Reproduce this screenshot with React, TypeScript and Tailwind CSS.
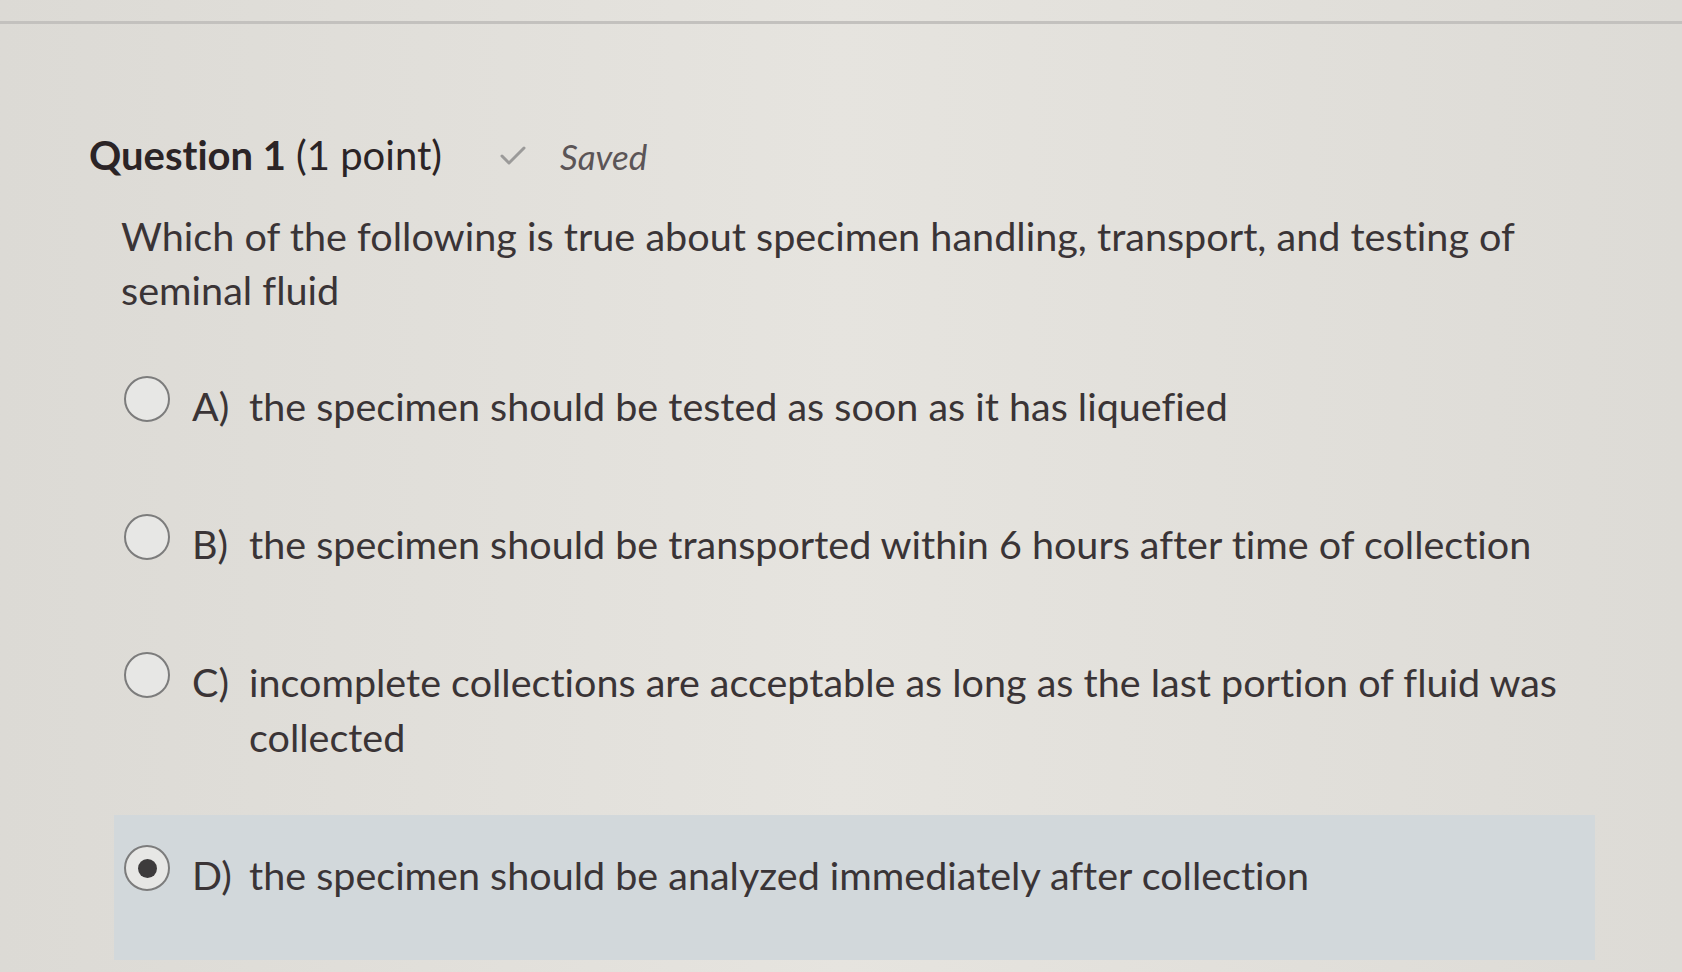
import React from "react"

interface Option {
  letter: string
  text: string
  selected?: boolean
}

const options: Option[] = [
  { letter: "A)", text: "the specimen should be tested as soon as it has liquefied" },
  { letter: "B)", text: "the specimen should be transported within 6 hours after time of collection" },
  {
    letter: "C)",
    text: "incomplete collections are acceptable as long as the last portion of fluid was collected",
  },
  { letter: "D)", text: "the specimen should be analyzed immediately after collection", selected: true },
]

function Radio({ checked }: { checked?: boolean }) {
  return (
    <div className="mt-[-2px] w-[46px] h-[46px] shrink-0 rounded-full border-2 border-[#7c7c7c] bg-[#e7e7e5] flex items-center justify-center">
      {checked && <div className="w-[19px] h-[19px] rounded-full bg-[#3d3b3c]" />}
    </div>
  )
}

function OptionRow({ option, last }: { option: Option; last?: boolean }) {
  return (
    <div
      className={`flex items-start pl-[10px] pr-[20px] ${
        option.selected ? "bg-[#d2d8db] pt-[32px] pb-[58px]" : last ? "pt-[28px] pb-[51px]" : "pt-[28px] pb-[55px]"
      }`}
    >
      <Radio checked={option.selected} />
      <div className="ml-[22px] flex text-[39.5px] leading-[55px] text-[#3a3436]">
        <span className="w-[57px] shrink-0">{option.letter}</span>
        <span>{option.text}</span>
      </div>
    </div>
  )
}

export default function App() {
  return (
    <div
      className="w-[1682px] h-[972px] overflow-hidden bg-linear-to-r from-[#dcdad5] via-[#e6e4df] to-[#dddbd6] [font-variant-ligatures:none]"
      style={{ fontFamily: "Lato, 'Open Sans', sans-serif" }}
    >
      <div className="h-[24px] border-b-[3px] border-[#c3c1be]" />

      <div className="pl-[89px] pt-[107px]">
        {/* Header */}
        <div className="flex items-baseline leading-[48px] text-[#2b2426]">
          <span className="text-[40px] font-bold">Question 1</span>
          <span className="text-[40px] ml-[10px]">(1 point)</span>
          <svg
            className="ml-[56px] w-[30px] h-[24px] self-center"
            viewBox="0 0 30 24"
            fill="none"
            stroke="#9b9a99"
            strokeWidth="3"
            strokeLinecap="round"
            strokeLinejoin="round"
          >
            <polyline points="4,12 11,19 26,4" />
          </svg>
          <span className="ml-[32px] text-[35px] italic text-[#5b5557]">Saved</span>
        </div>

        {/* Question text */}
        <div className="mt-[29px] ml-[32px] w-[1430px] text-[39.6px] leading-[54px] text-[#3a3436]">
          Which of the following is true about specimen handling, transport, and testing of seminal fluid
        </div>

        {/* Options */}
        <div className="mt-[33px] ml-[25px] w-[1481px]">
          {options.map((o, i) => (
            <OptionRow key={o.letter} option={o} last={i === 2} />
          ))}
        </div>
      </div>
    </div>
  )
}
